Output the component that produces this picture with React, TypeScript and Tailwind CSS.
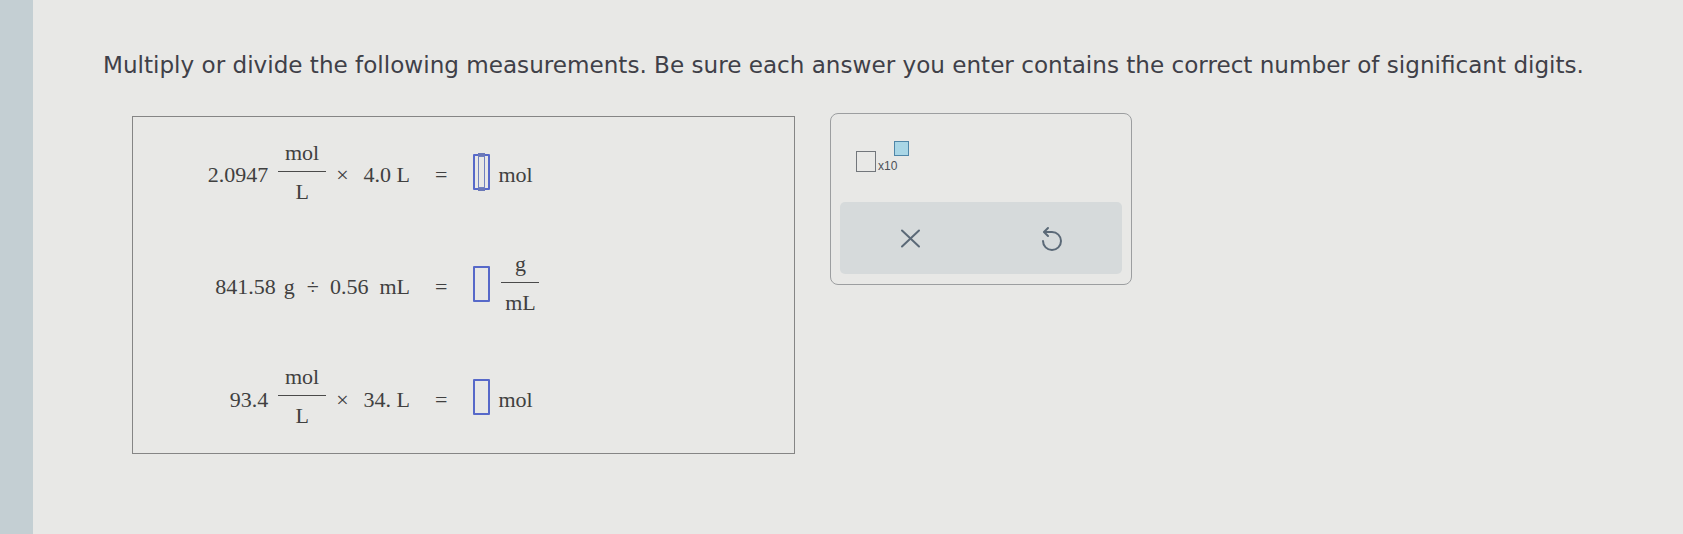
import React from 'react';

function Frac({ num, den, width }: { num: string; den: string; width: string }) {
  return (
    <span className={`flex flex-col items-center ${width}`}>
      <span className="leading-[22px]">{num}</span>
      <span className="mt-[7px] h-px w-full bg-[#4a4a4a]" />
      <span className="mt-[9px] leading-[22px]">{den}</span>
    </span>
  );
}

function Txt({ children, className = '' }: { children: React.ReactNode; className?: string }) {
  return <span className={`pt-[6px] leading-[22px] whitespace-pre ${className}`}>{children}</span>;
}

function AnswerBox({ active = false }: { active?: boolean }) {
  return (
    <span className="relative flex h-[36px] w-[17px] justify-center border-2 border-[#5769c9] rounded-[1px]">
      {active && (
        <>
          <span className="h-full w-[7px] border border-[#7080c0]" />
          <span className="absolute -top-[3px] left-[3px] h-[3px] w-[7px] bg-[#6a78b8]" />
          <span className="absolute -bottom-[3px] left-[3px] h-[3px] w-[7px] bg-[#6a78b8]" />
        </>
      )}
    </span>
  );
}

function Row({ height, left, right }: { height: string; left: React.ReactNode; right: React.ReactNode }) {
  return (
    <div className={`flex items-center ${height}`}>
      <div className="flex w-[277px] items-center justify-end">{left}</div>
      <Txt className="ml-[25px]">=</Txt>
      <div className="ml-[26px] flex items-center">{right}</div>
    </div>
  );
}

function UndoIcon() {
  return (
    <svg width="26" height="30" viewBox="0 0 26 30" fill="none" stroke="#5b6977" strokeWidth="2" strokeLinecap="round" strokeLinejoin="round">
      <path d="M9 5 L5 9 L9 13" />
      <path d="M5.5 9 H13 A9 9 0 1 1 4 18" />
    </svg>
  );
}

function XIcon() {
  return (
    <svg width="21" height="19" viewBox="0 0 21 19" fill="none" stroke="#5b6977" strokeWidth="2" strokeLinecap="round">
      <path d="M2 1.5 L19 17.5" />
      <path d="M19 1.5 L2 17.5" />
    </svg>
  );
}

export default function App() {
  return (
    <div className="flex h-[534px] w-full overflow-hidden bg-[#e8e8e6]">
      <div className="w-[33px] shrink-0 bg-[#c4cfd3]" />
      <div className="flex-1">
        <h1 className="pl-[70px] pt-[54px] text-[23.1px] leading-none font-normal text-[#3f4048] whitespace-nowrap [font-family:'DejaVu_Sans',sans-serif]">
          Multiply or divide the following measurements. Be sure each answer you enter contains the correct number of significant digits.
        </h1>

        <div className="mt-[36px] ml-[99px] flex items-start">
          <div className="mt-[3px] flex w-[663px] flex-col border border-[#858585] text-[22px] text-[#404040] [font-family:'Liberation_Serif',serif]">
            <Row
              height="h-[110px]"
              left={
                <>
                  <Txt>2.0947</Txt>
                  <span className="ml-[10px]">
                    <Frac num="mol" den="L" width="w-[48px]" />
                  </span>
                  <Txt className="ml-[10px]">×</Txt>
                  <Txt className="ml-[15px]">4.0 L</Txt>
                </>
              }
              right={
                <>
                  <AnswerBox active />
                  <Txt className="ml-[8px]">mol</Txt>
                </>
              }
            />
            <Row
              height="h-[113px]"
              left={
                <>
                  <Txt>841.58</Txt>
                  <Txt className="ml-[8px]">g</Txt>
                  <Txt className="ml-[12px]">÷</Txt>
                  <Txt className="ml-[11px]">0.56</Txt>
                  <Txt className="ml-[11px]">mL</Txt>
                </>
              }
              right={
                <>
                  <AnswerBox />
                  <span className="ml-[11px]">
                    <Frac num="g" den="mL" width="w-[38px]" />
                  </span>
                </>
              }
            />
            <Row
              height="h-[113px]"
              left={
                <>
                  <Txt>93.4</Txt>
                  <span className="ml-[10px]">
                    <Frac num="mol" den="L" width="w-[48px]" />
                  </span>
                  <Txt className="ml-[10px]">×</Txt>
                  <Txt className="ml-[15px]">34. L</Txt>
                </>
              }
              right={
                <>
                  <AnswerBox />
                  <Txt className="ml-[8px]">mol</Txt>
                </>
              }
            />
          </div>

          <div className="ml-[35px] flex h-[172px] w-[302px] flex-col rounded-[8px] border-[1.5px] border-[#9c9ea0] px-[9px] pt-[27px] pb-[9px]">
            <div className="ml-[16px] flex h-[32px] items-end">
              <span className="mb-[1px] h-[21px] w-[20px] border-[1.5px] border-[#72767b]" />
              <span className="ml-[2px] mb-[1px] text-[12px] leading-none text-[#4c5057] [font-family:'Liberation_Sans',sans-serif]">x10</span>
              <span className="-ml-[3px] self-start h-[15px] w-[15px] border-[1.5px] border-[#4f86a8] bg-[#a9d6e6]" />
            </div>
            <div className="mt-[29px] grid h-[72px] grid-cols-2 items-center rounded-[5px] bg-[#d6dadb]">
              <div className="flex justify-center">
                <XIcon />
              </div>
              <div className="flex justify-center">
                <UndoIcon />
              </div>
            </div>
          </div>
        </div>
      </div>
    </div>
  );
}
